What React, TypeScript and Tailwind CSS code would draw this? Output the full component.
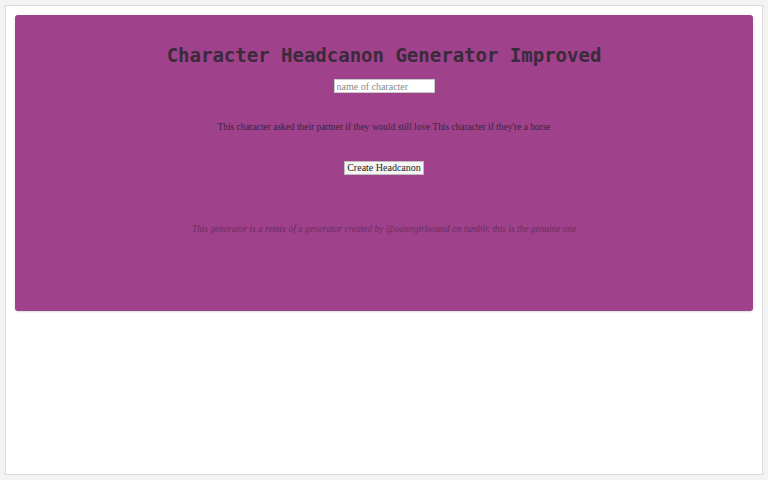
export default function App() {
  return (
    <div className="min-h-[480px] w-full bg-[#f3f3f3] p-[5px]">
      <div className="h-[470px] border border-[#dcdcdc] bg-white p-[9px]">
        <div className="flex h-[296px] flex-col items-center rounded-[3px] bg-[#9f418b] font-['Liberation_Serif',serif] shadow-[0_1px_2px_rgba(0,0,0,0.15)]">
          <h1 className="mt-[29px] font-['DejaVu_Sans_Mono',monospace] text-[19px] font-bold leading-[22px] text-[#3a2a3a]">
            Character Headcanon Generator Improved
          </h1>
          <input
            type="text"
            placeholder="name of character"
            className="mt-[13px] h-[14px] w-[101px] border border-[#c9c9c9] bg-white px-[2px] text-[10px] leading-[12px] text-[#333] outline-none placeholder:text-[#8a8a8a]"
          />
          <p className="mt-[28px] text-[9.4px] leading-[12px] text-[#3a2440]">
            This character asked their partner if they would still love This character if they're a horse
          </p>
          <button className="mt-[28px] h-[14px] border border-[#bdbdbd] bg-[#f6f6f6] px-[2px] text-[10px] leading-[12px] text-[#222]">
            Create Headcanon
          </button>
          <p className="mt-[48px] text-[9.4px] italic leading-[12px] text-[#6b2c61]">
            This generator is a remix of a generator created by @outergirlsound on tumblr. this is the genuine one
          </p>
        </div>
      </div>
    </div>
  );
}
